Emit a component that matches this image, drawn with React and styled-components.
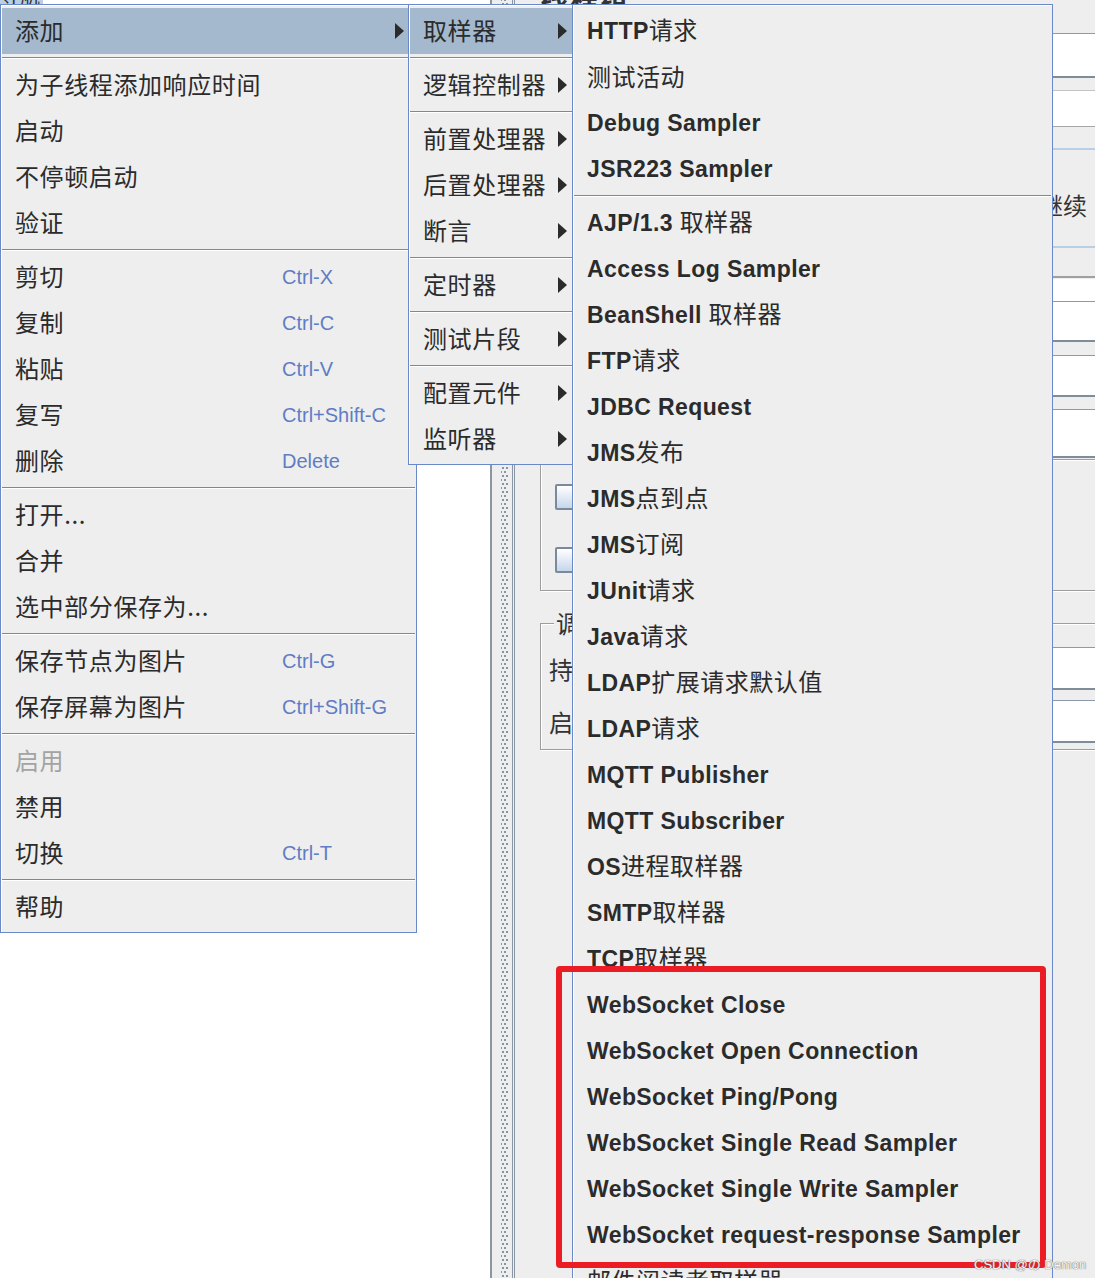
import React from 'react';
import styled, { createGlobalStyle } from 'styled-components';

const GlobalStyle = createGlobalStyle`
  html, body {
    margin: 0;
    padding: 0;
    background: #ffffff;
  }
  body {
    font-family: "Liberation Sans", "Noto Sans CJK SC", sans-serif;
  }
`;

// ---- background window (JMeter thread group page) ----

const Screen = styled.div`
  position: relative;
  width: 1095px;
  height: 1278px;
  overflow: hidden;
  display: flex;
  background: #eeeeee;
`;

const TreePane = styled.div`
  flex: none;
  width: 490px;
  background: #ffffff;
`;

const TreeNode = styled.div`
  margin-top: -19px;
  width: 43px;
  height: 23px;
  line-height: 23px;
  overflow: hidden;
  background: #b8cfe5;
  color: #333333;
  font: 20px "Noto Sans CJK SC", sans-serif;
`;

const Splitter = styled.div`
  flex: none;
  width: 25px;
  box-sizing: border-box;
  border-left: 2px solid #8a96a4;
  border-right: 3px double #8a96a4;
  background: #eeeeee;
  padding: 0 4px 0 9px;
`;

const Grip = styled.div`
  height: 100%;
  background-image: radial-gradient(circle, #8394a7 1px, transparent 1.4px),
    radial-gradient(circle, #8394a7 1px, transparent 1.4px);
  background-size: 4px 8px;
  background-position: 0 0, 2px 4px;
`;

const FormPane = styled.div`
  flex: 1;
  min-width: 0;
  display: flex;
  flex-direction: column;
  padding-left: 25px;
  background: #eeeeee;
  color: #333333;
`;

const PageTitle = styled.div`
  margin-top: -22px;
  height: 28px;
  line-height: 28px;
  font: 700 28px "Noto Sans CJK SC", sans-serif;
  letter-spacing: 2px;
`;

const FieldRow = styled.div`
  display: flex;
  align-items: center;
  gap: 10px;
  margin-top: ${p => p.$gap}px;
  font: 24px "Noto Sans CJK SC", sans-serif;
`;

const Field = styled.div`
  flex: 1;
  height: ${p => p.$h}px;
  background: #ffffff;
  border-top: 1px solid ${p => (p.$light ? '#c4c4c4' : '#8d9aa8')};
  border-bottom: ${p => (p.$light ? '1px solid #a6a6a6' : '2px solid #7f8c99')};
`;

const ErrorGroup = styled.div`
  margin-top: 21px;
  height: 84px;
  padding: 12px 8px 0 0;
  border-top: 2px solid #b8d0e6;
  border-bottom: 2px solid #b8d0e6;
  display: flex;
  align-items: center;
  justify-content: flex-end;
  font: 24px "Noto Sans CJK SC", sans-serif;
`;

const ThreadGroup = styled.div`
  margin-top: 28px;
  border-top: 2px solid #a0a0a0;
  display: flex;
  flex-direction: column;
`;

const WhiteStrip = styled.div`
  height: 22px;
  margin-top: 1px;
  background: #ffffff;
`;

const BoxGroup = styled.div`
  margin-top: ${p => p.$gap}px;
  margin-right: -12px;
  border: 1px solid #9d9d9d;
  box-shadow: inset 1px 1px 0 #ffffff, 1px 1px 0 #ffffff;
  display: flex;
  flex-direction: column;
  padding: ${p => p.$pad};
  position: relative;
`;

const Legend = styled.span`
  position: absolute;
  top: -16px;
  left: 13px;
  padding: 0 2px;
  background: #eeeeee;
  font: 24px "Noto Sans CJK SC", sans-serif;
  line-height: 30px;
`;

const CheckRow = styled.div`
  display: flex;
  align-items: center;
  gap: 10px;
  height: 26px;
  margin-top: ${p => p.$gap}px;
`;

const CheckBox = styled.span`
  flex: none;
  width: 22px;
  height: 22px;
  border: 2px solid #7b8a9b;
  border-radius: 2px;
  background: linear-gradient(#ffffff, #c6d6ea);
`;

const SchedRow = styled.div`
  display: flex;
  align-items: center;
  gap: 20px;
  height: 44px;
  margin-top: ${p => p.$gap}px;
  font: 24px "Noto Sans CJK SC", sans-serif;
`;

// ---- popup menus ----

const Menu = styled.div`
  position: absolute;
  top: 4px;
  left: ${p => p.$x}px;
  width: ${p => p.$w}px;
  z-index: ${p => p.$z};
  box-sizing: border-box;
  padding: 3px 1px 2px;
  background: #eeeeee;
  border: 1px solid #6a89c9;
  box-shadow: inset 1px 1px 0 #ffffff;
  color: #2b2b2b;
`;

// the CJK font sets the strut so latin-only and mixed rows share one baseline
const Item = styled.div`
  display: flex;
  align-items: center;
  box-sizing: border-box;
  height: 46px;
  padding: 0 ${p => p.$padR}px 3px 13px;
  background: ${p => (p.$active ? '#a4b9ce' : 'transparent')};
  color: ${p => (p.$disabled ? '#a3a3a3' : '#2b2b2b')};
  font: 24px/24px "Noto Sans CJK SC", sans-serif;
  white-space: nowrap;
`;

const Label = styled.span`
  flex: 1;
  letter-spacing: 0.6px;
`;

const Shortcut = styled.span`
  width: 122px;
  margin-top: 3px;
  font: 20px/24px "Liberation Sans", sans-serif;
  color: #5f7dc4;
`;

const Arrow = styled.span`
  width: 0;
  height: 0;
  margin-top: 2px;
  border-left: 9px solid #2b2b2b;
  border-top: 8px solid transparent;
  border-bottom: 8px solid transparent;
`;

const Separator = styled.div`
  margin: 3px 0;
  border-top: 1px solid #6a89c9;
  border-bottom: 1px solid #ffffff;
`;

const Latin = styled.span`
  font: 700 23px/24px "Liberation Sans", sans-serif;
  letter-spacing: 0.4px;
`;

const Cjk = styled.span`
  letter-spacing: 0.5px;
`;

const RedBox = styled.div`
  position: absolute;
  left: 556px;
  top: 966px;
  width: 490px;
  height: 302px;
  box-sizing: border-box;
  border: 6px solid #ec1c24;
  border-radius: 4px;
  z-index: 4;
`;

const Watermark = styled.div`
  position: absolute;
  left: 974px;
  top: 1254px;
  z-index: 5;
  font: 13px "Liberation Sans", "Noto Sans CJK SC", sans-serif;
  color: #f4f4f4;
  text-shadow: 0 0 1px #6f6f6f, 0 0 1px #6f6f6f;
`;

const mainMenu = [
  [{ label: '添加', sub: true, active: true }],
  [{ label: '为子线程添加响应时间' }, { label: '启动' }, { label: '不停顿启动' }, { label: '验证' }],
  [
    { label: '剪切', key: 'Ctrl-X' },
    { label: '复制', key: 'Ctrl-C' },
    { label: '粘贴', key: 'Ctrl-V' },
    { label: '复写', key: 'Ctrl+Shift-C' },
    { label: '删除', key: 'Delete' },
  ],
  [{ label: '打开...' }, { label: '合并' }, { label: '选中部分保存为...' }],
  [
    { label: '保存节点为图片', key: 'Ctrl-G' },
    { label: '保存屏幕为图片', key: 'Ctrl+Shift-G' },
  ],
  [{ label: '启用', disabled: true }, { label: '禁用' }, { label: '切换', key: 'Ctrl-T' }],
  [{ label: '帮助' }],
];

const addMenu = [
  [{ label: '取样器', sub: true, active: true }],
  [{ label: '逻辑控制器', sub: true }],
  [
    { label: '前置处理器', sub: true },
    { label: '后置处理器', sub: true },
    { label: '断言', sub: true },
  ],
  [{ label: '定时器', sub: true }],
  [{ label: '测试片段', sub: true }],
  [
    { label: '配置元件', sub: true },
    { label: '监听器', sub: true },
  ],
];

const samplerMenu = [
  ['HTTP请求', '测试活动', 'Debug Sampler', 'JSR223 Sampler'],
  [
    'AJP/1.3 取样器', 'Access Log Sampler', 'BeanShell 取样器', 'FTP请求', 'JDBC Request',
    'JMS发布', 'JMS点到点', 'JMS订阅', 'JUnit请求', 'Java请求', 'LDAP扩展请求默认值',
    'LDAP请求', 'MQTT Publisher', 'MQTT Subscriber', 'OS进程取样器', 'SMTP取样器',
    'TCP取样器', 'WebSocket Close', 'WebSocket Open Connection', 'WebSocket Ping/Pong',
    'WebSocket Single Read Sampler', 'WebSocket Single Write Sampler',
    'WebSocket request-response Sampler', '邮件阅读者取样器',
  ],
];

// bold latin runs, plain CJK runs, as the Swing menu draws them
const MixedLabel = ({ text }) =>
  text
    .split(/([\u3000-\u9fff\uff00-\uffef]+)/)
    .filter(Boolean)
    .map((part, i) =>
      /[\u3000-\u9fff]/.test(part) ? <Cjk key={i}>{part}</Cjk> : <Latin key={i}>{part}</Latin>
    );

const PopupMenu = ({ groups, x, w, z, padR }) => (
  <Menu $x={x} $w={w} $z={z}>
    {groups.map((group, gi) => (
      <React.Fragment key={gi}>
        {gi > 0 && <Separator />}
        {group.map(item => (
          <Item key={item.label} $active={item.active} $disabled={item.disabled} $padR={padR}>
            <Label>{item.label}</Label>
            {item.key && <Shortcut>{item.key}</Shortcut>}
            {item.sub && <Arrow />}
          </Item>
        ))}
      </React.Fragment>
    ))}
  </Menu>
);

const App = () => {
  return (
    <>
      <GlobalStyle />
      <Screen>
        <TreePane>
          <TreeNode>导航</TreeNode>
        </TreePane>
        <Splitter>
          <Grip />
        </Splitter>
        <FormPane>
          <PageTitle>线程组</PageTitle>
          <FieldRow $gap={27}>
            <span>名称：</span>
            <Field $h={42} />
          </FieldRow>
          <FieldRow $gap={12}>
            <span>注释：</span>
            <Field $h={35} $light />
          </FieldRow>
          <ErrorGroup>继续</ErrorGroup>
          <ThreadGroup>
            <WhiteStrip />
            <FieldRow $gap={0}>
              <span>线程数：</span>
              <Field $h={38} />
            </FieldRow>
            <FieldRow $gap={13}>
              <span>Ramp-Up时间（秒）：</span>
              <Field $h={39} />
            </FieldRow>
            <FieldRow $gap={12}>
              <span>循环次数</span>
              <Field $h={46} />
            </FieldRow>
          </ThreadGroup>
          <BoxGroup $gap={1} $pad="0 0 17px 14px">
            <CheckRow $gap={24}>
              <CheckBox />
              <span>Same user on each iteration</span>
            </CheckRow>
            <CheckRow $gap={37}>
              <CheckBox />
              <span>延迟创建线程直到需要</span>
            </CheckRow>
          </BoxGroup>
          <BoxGroup $gap={32} $pad="0 0 6px 8px">
            <Legend>调度器配置</Legend>
            <SchedRow $gap={22}>
              <span>持续时间（秒）</span>
              <Field $h={40} />
            </SchedRow>
            <SchedRow $gap={9}>
              <span>启动延迟（秒）</span>
              <Field $h={40} />
            </SchedRow>
          </BoxGroup>
        </FormPane>

        <PopupMenu groups={mainMenu} x={0} w={417} z={1} padR={11} />
        <PopupMenu groups={addMenu} x={408} w={166} z={2} padR={5} />
        <Menu $x={572} $w={481} $z={3}>
          {samplerMenu.map((group, gi) => (
            <React.Fragment key={gi}>
              {gi > 0 && <Separator />}
              {group.map(label => (
                <Item key={label} $padR={11}>
                  <span>
                    <MixedLabel text={label} />
                  </span>
                </Item>
              ))}
            </React.Fragment>
          ))}
        </Menu>

        <RedBox />
        <Watermark>CSDN @の Demon</Watermark>
      </Screen>
    </>
  );
};

export default App;
